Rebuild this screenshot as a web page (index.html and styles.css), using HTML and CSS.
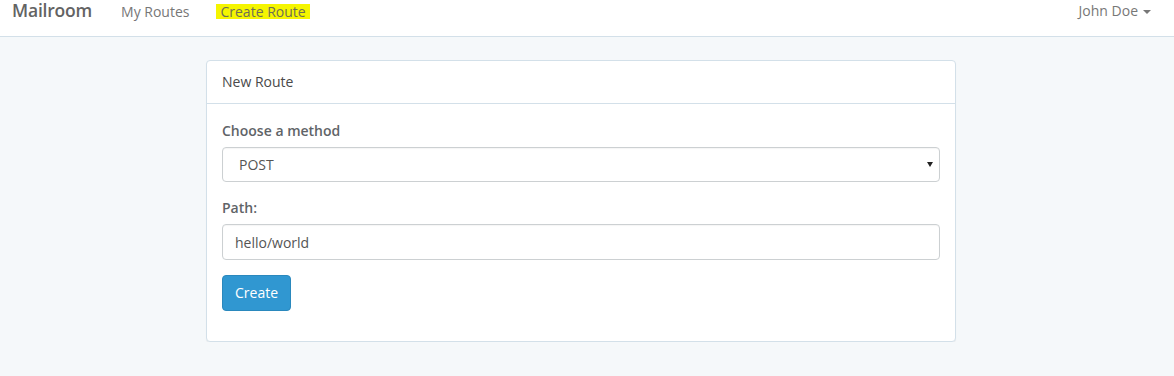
FILE: index.html
```html
<!DOCTYPE html>
<html lang="en">
<head>
<meta charset="utf-8">
<title>Mailroom</title>
<link rel="stylesheet" href="styles.css">
</head>
<body>
<nav class="navbar">
  <div class="nav-left">
    <a class="brand" href="#">Mailroom</a>
    <a class="nav-link" href="#">My Routes</a>
    <a class="nav-link" href="#"><span class="highlight">Create Route</span></a>
  </div>
  <div class="nav-right">
    <a class="nav-link user" href="#">John Doe <span class="caret"></span></a>
  </div>
</nav>
<main class="main">
  <section class="panel">
    <div class="panel-heading">New Route</div>
    <form class="panel-body">
      <div class="form-group">
        <label class="label" for="method">Choose a method</label>
        <div class="select-wrap">
          <select class="form-control select" id="method">
            <option>POST</option>
            <option>GET</option>
          </select>
        </div>
      </div>
      <div class="form-group">
        <label class="label" for="path">Path:</label>
        <input class="form-control input" id="path" type="text" value="hello/world">
      </div>
      <div class="form-group">
        <button class="btn" type="button">Create</button>
      </div>
    </form>
  </section>
</main>
</body>
</html>
```
FILE: styles.css
```css
* { box-sizing: border-box; }
html, body { margin: 0; padding: 0; }
body {
  background: #f5f8fa;
  font-family: "Open Sans", "Liberation Sans", sans-serif;
  font-size: 14px;
  line-height: 22px;
  color: #636b6f;
}
a { text-decoration: none; }

.navbar {
  height: 37px;
  background: #fff;
  border-bottom: 1px solid #d3e0e9;
  display: flex;
  justify-content: space-between;
  align-items: flex-start;
  padding: 0 23px 0 12px;
}
.nav-left, .nav-right {
  display: flex;
  align-items: baseline;
}
.brand {
  font-size: 17.5px;
  font-weight: 600;
  color: #636363;
  line-height: 20px;
  letter-spacing: -0.2px;
  margin-right: 29px;
}
.nav-link {
  color: #777;
  font-size: 14px;
  line-height: 22px;
}
.nav-link + .nav-link { margin-left: 27px; }
.highlight {
  display: inline-block;
  background: #f5f500;
  color: #6f6f55;
  line-height: 15px;
  padding: 0 4px;
}
.user { display: flex; align-items: center; }
.caret {
  display: inline-block;
  width: 0;
  height: 0;
  margin-left: 5px;
  margin-top: 2px;
  border-top: 4px solid #777;
  border-left: 4px solid transparent;
  border-right: 4px solid transparent;
}

.main {
  padding: 23px 0 0 206px;
}
.panel {
  width: 750px;
  background: #fff;
  border: 1px solid #d3e0e9;
  border-radius: 4px;
  box-shadow: 0 1px 1px rgba(0,0,0,0.05);
}
.panel-heading {
  padding: 10px 15px;
  line-height: 22px;
  color: #4a4a4a;
  border-bottom: 1px solid #d3e0e9;
}
.panel-body {
  padding: 16px 15px 15px;
  margin: 0;
}
.form-group { margin-bottom: 15px; }
.label {
  display: block;
  font-weight: 600;
  color: #5f6468;
  line-height: 22px;
  margin-bottom: 5px;
}
.form-control {
  display: block;
  width: 100%;
  border: 1px solid #ccd0d2;
  border-radius: 4px;
  background: #fff;
  font-family: "Open Sans", "Liberation Sans", sans-serif;
  font-size: 14px;
  color: #555;
  box-shadow: inset 0 1px 1px rgba(0,0,0,0.04);
  margin: 0;
  outline: none;
}
.select-wrap { position: relative; }
.select-wrap::after {
  content: "";
  position: absolute;
  right: 7px;
  top: 15px;
  width: 0;
  height: 0;
  border-top: 5px solid #222;
  border-left: 3px solid transparent;
  border-right: 3px solid transparent;
  pointer-events: none;
}
.select {
  height: 35px;
  padding: 0 20px 0 16px;
  -webkit-appearance: none;
  appearance: none;
}
.input {
  height: 36px;
  padding: 6px 12px;
}
.btn {
  display: inline-block;
  height: 36px;
  padding: 6px 12px;
  font-family: "Open Sans", "Liberation Sans", sans-serif;
  font-size: 14px;
  line-height: 22px;
  color: #fff;
  background: #3097d1;
  border: 1px solid #2a88bd;
  border-radius: 4px;
  cursor: pointer;
}
```
